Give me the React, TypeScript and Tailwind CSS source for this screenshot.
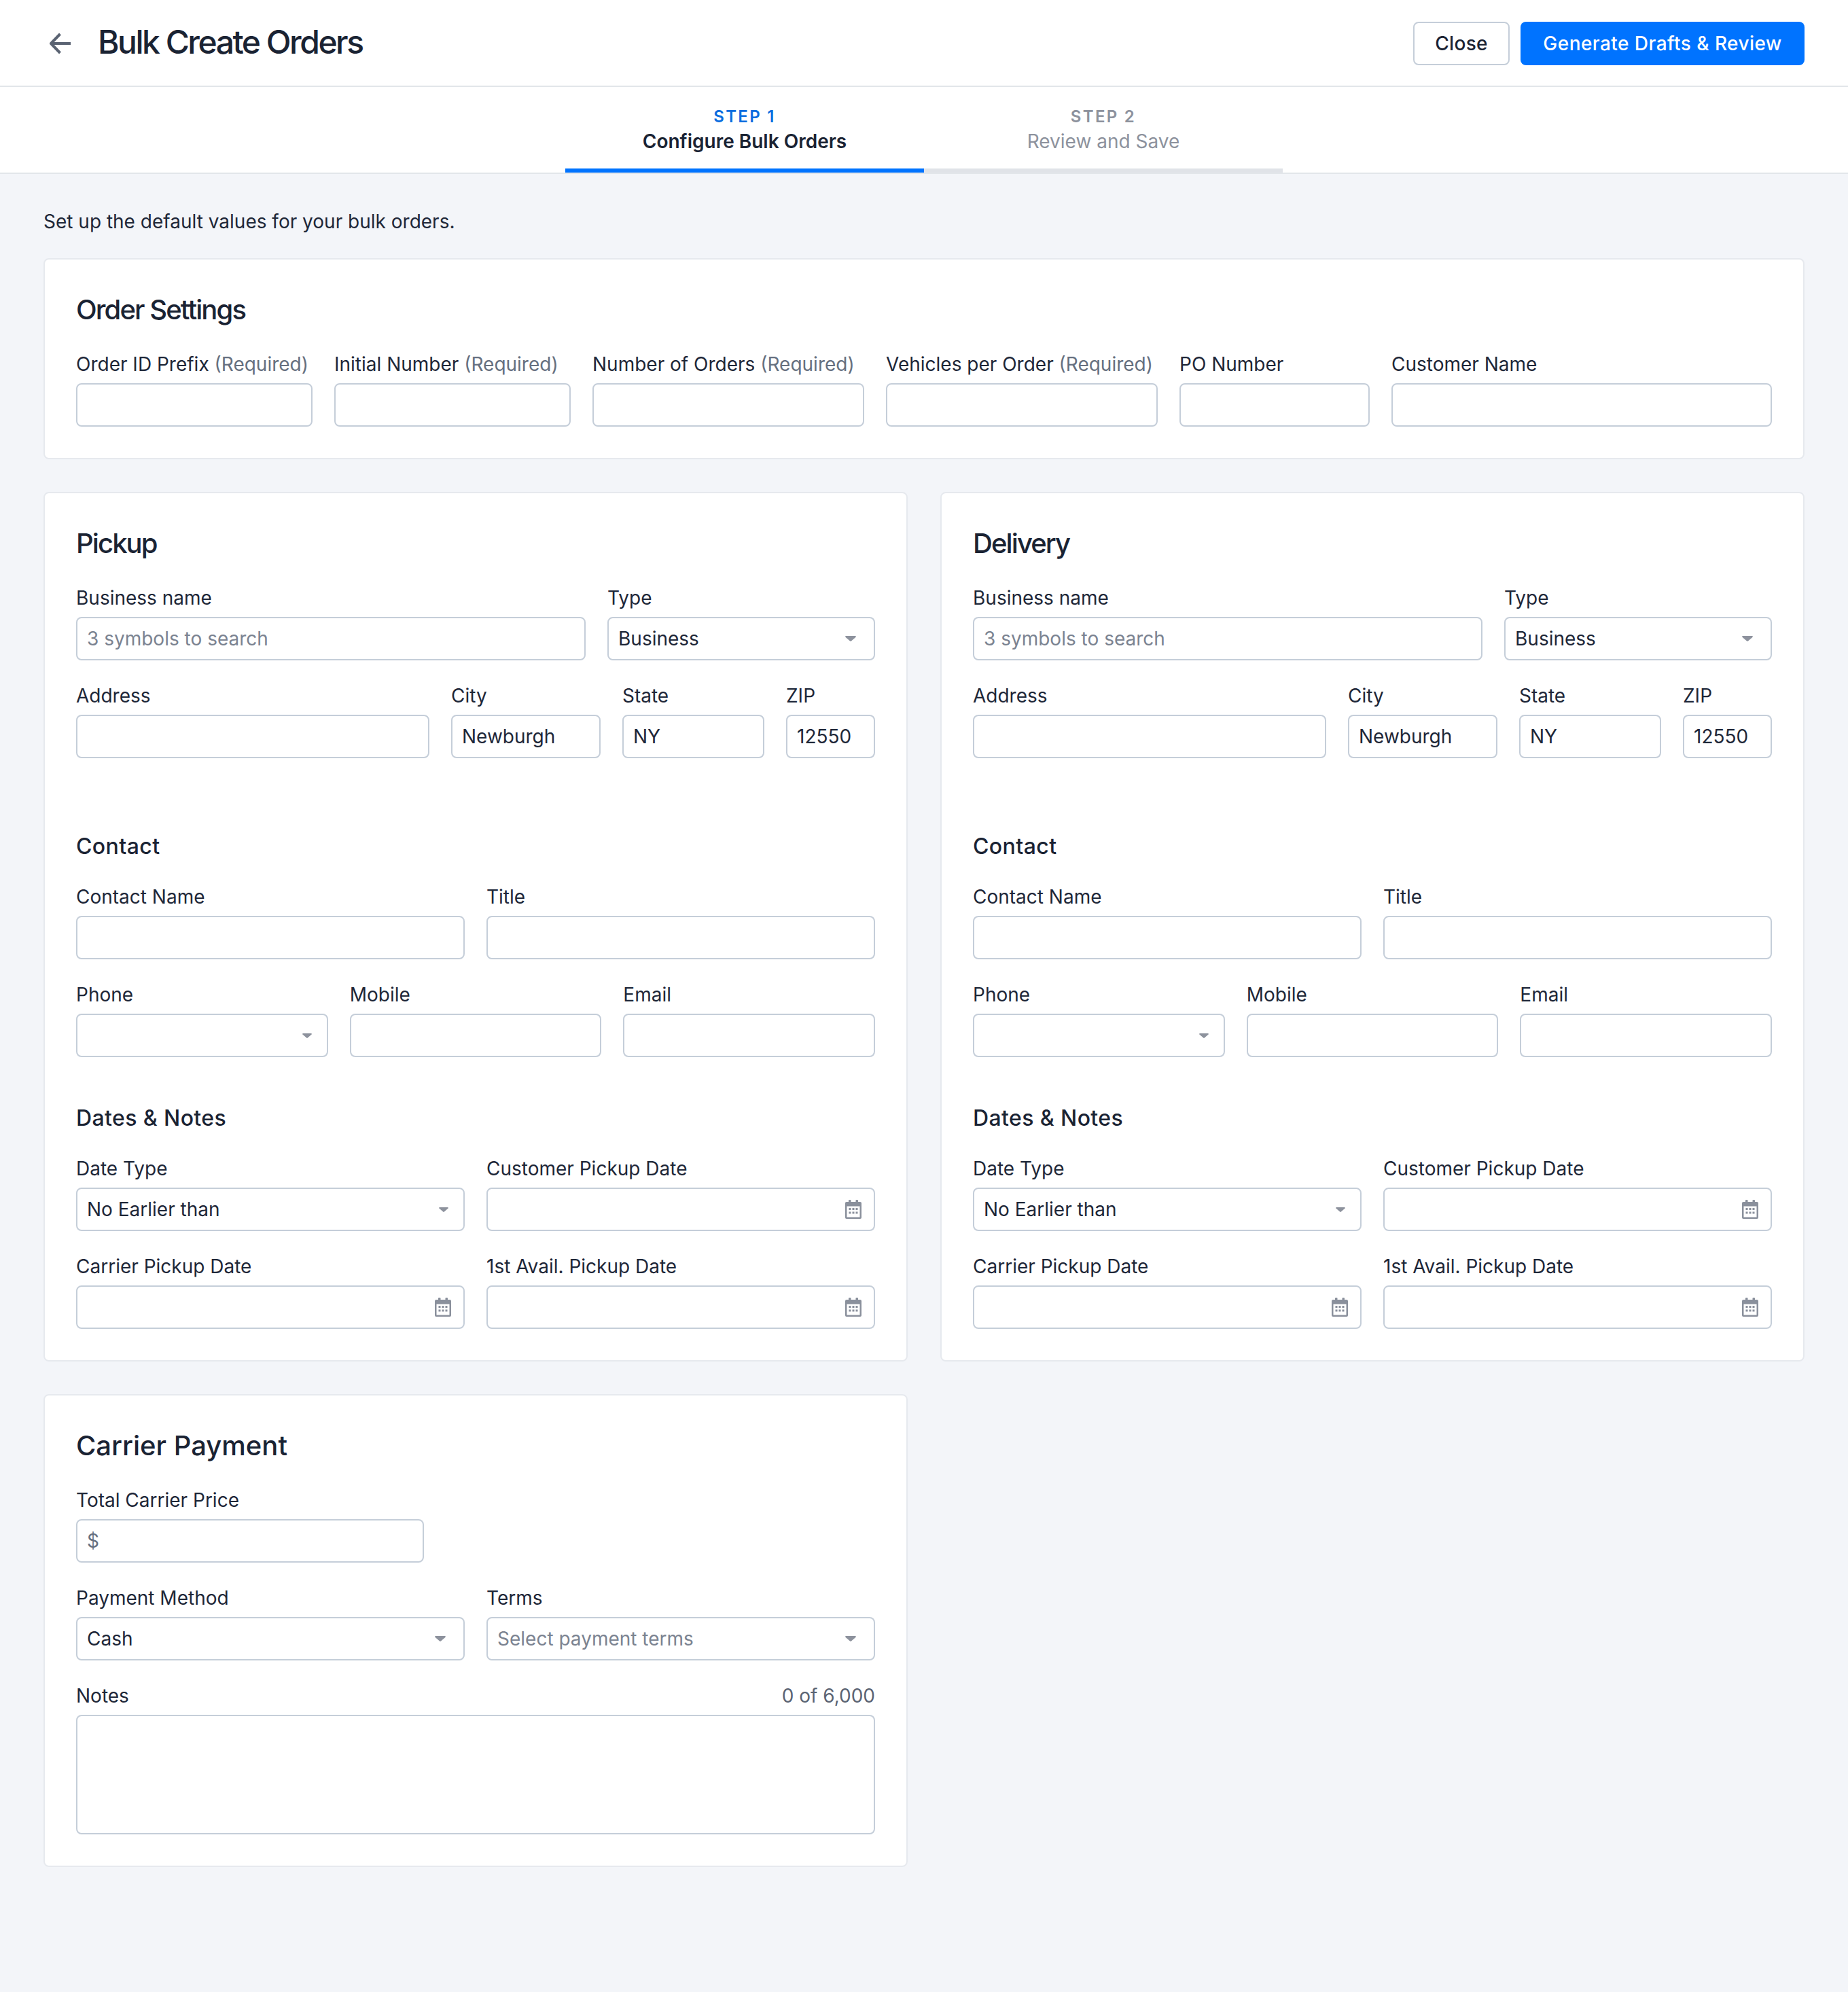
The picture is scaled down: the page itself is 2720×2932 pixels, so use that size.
import React from 'react';

interface FieldProps {
  label: string;
  hint?: string;
  value?: string;
  placeholder?: string;
  icon?: 'caret' | 'caretSmall' | 'calendar';
  muted?: boolean;
}

const Caret = ({ small }: { small?: boolean }) => (
  <svg
    viewBox="0 0 16 8"
    className={small ? 'h-[7px] w-[14px] mr-[10px] shrink-0' : 'h-[8px] w-[16px] mr-[14px] shrink-0'}
    fill="#8d929d"
  >
    <path d="M1.2 0h13.6c.9 0 1.4 1 .8 1.7L9 7.5c-.5.6-1.5.6-2 0L.4 1.7C-.2 1 .3 0 1.2 0z" />
  </svg>
);

const CalendarIcon = () => (
  <svg viewBox="0 0 24 28" className="h-[28px] w-[24px] mr-[6px] shrink-0" fill="#8a909c">
    <rect x="5" y="0" width="3.5" height="5" rx="1" />
    <rect x="15.5" y="0" width="3.5" height="5" rx="1" />
    <rect x="0" y="3" width="24" height="25" rx="2" />
    <rect x="2.5" y="9.5" width="19" height="16" fill="#fff" />
    <rect x="5.5" y="12" width="3" height="3" />
    <rect x="10.5" y="12" width="3" height="3" />
    <rect x="15.5" y="12" width="3" height="3" />
    <rect x="5.5" y="17.5" width="3" height="3" />
    <rect x="10.5" y="17.5" width="3" height="3" />
    <rect x="15.5" y="17.5" width="3" height="3" />
  </svg>
);

const Field = ({ label, hint, value, placeholder, icon, muted }: FieldProps) => (
  <div className="min-w-0">
    <div className="mb-2 h-[40px] whitespace-nowrap text-[28px] leading-[40px] text-[#1e2738]">
      {label}
      {hint && <span className="text-[#667080]"> {hint}</span>}
    </div>
    <div className="flex h-[64px] items-center rounded-lg border-2 border-[#c5ced9] bg-white pl-[14px] pr-[12px]">
      <input
        readOnly
        value={value ?? ''}
        placeholder={placeholder}
        className={`min-w-0 flex-1 bg-transparent text-[28px] outline-none placeholder:text-[#7b8391] ${muted ? 'text-[#667080]' : 'text-[#1e2738]'}`}
      />
      {icon === 'caret' && <Caret />}
      {icon === 'caretSmall' && <Caret small />}
      {icon === 'calendar' && <CalendarIcon />}
    </div>
  </div>
);

const Card = ({ title, wide, children }: { title: string; wide?: boolean; children: React.ReactNode }) => (
  <section className="rounded-lg border-2 border-[#e6e9ee] bg-white p-[46px]">
    <h2 className={`mb-8 text-[40px] font-medium leading-[56px] text-[#1a2333] ${wide ? '' : 'tracking-[-1.9px]'}`}>{title}</h2>
    <div className="flex flex-col gap-8">{children}</div>
  </section>
);

const SubHeading = ({ children, className }: { children: React.ReactNode; className: string }) => (
  <h3 className={`mb-[-2px] text-[32px] font-medium leading-[48px] tracking-[0.4px] text-[#1a2333] ${className}`}>{children}</h3>
);

const Location = ({ title }: { title: string }) => (
  <Card title={title}>
    <div className="grid grid-cols-[750px_394px] gap-8">
      <Field label="Business name" placeholder="3 symbols to search" />
      <Field label="Type" value="Business" icon="caret" />
    </div>
    <div className="grid grid-cols-[520px_220px_209px_131px] gap-8">
      <Field label="Address" />
      <Field label="City" value="Newburgh" />
      <Field label="State" value="NY" />
      <Field label="ZIP" value="12550" />
    </div>
    <SubHeading className="mt-[74px]">Contact</SubHeading>
    <div className="grid grid-cols-2 gap-8">
      <Field label="Contact Name" />
      <Field label="Title" />
    </div>
    <div className="grid grid-cols-3 gap-8">
      <Field label="Phone" icon="caretSmall" />
      <Field label="Mobile" />
      <Field label="Email" />
    </div>
    <SubHeading className="mt-[34px]">Dates &amp; Notes</SubHeading>
    <div className="grid grid-cols-2 gap-8">
      <Field label="Date Type" value="No Earlier than" icon="caretSmall" />
      <Field label="Customer Pickup Date" icon="calendar" />
      <Field label="Carrier Pickup Date" icon="calendar" />
      <Field label="1st Avail. Pickup Date" icon="calendar" />
    </div>
  </Card>
);

export default function App() {
  return (
    <div className="min-h-[2932px] bg-[#f3f5f9] font-['Inter',sans-serif]">
      <header className="flex h-[128px] items-center justify-between border-b-2 border-[#e2e6ea] bg-white pl-[72px] pr-[64px] pt-[2px]">
        <div className="flex items-center gap-[40px]">
          <svg viewBox="0 0 32 32" className="h-[32px] w-[32px]" fill="none" stroke="#5a6372" strokeWidth="4" strokeLinejoin="round">
            <path d="M32 16H3M16.5 2L3 16l13.5 14" />
          </svg>
          <h1 className="mb-[4px] text-[48px] font-medium leading-[64px] tracking-[-2.5px] text-[#1a2333]">Bulk Create Orders</h1>
        </div>
        <div className="flex items-center gap-4">
          <button className="h-[64px] w-[142px] rounded-lg border-2 border-[#c5ced9] bg-white text-[28px] font-medium tracking-[0.3px] text-[#1a2333]">
            Close
          </button>
          <button className="h-[64px] w-[418px] rounded-lg bg-[#0073ff] text-[28px] font-medium tracking-[0.45px] text-white">
            Generate Drafts &amp; Review
          </button>
        </div>
      </header>

      <nav className="flex h-[128px] justify-center border-b-2 border-[#e2e6ea] bg-white">
        <div className="flex h-[126px] w-[528px] flex-col items-center border-b-[6px] border-[#0073ff] pt-[26px]">
          <span className="text-[24px] font-semibold leading-[36px] tracking-[2.3px] text-[#0a6ddf]">STEP 1</span>
          <span className="text-[28px] font-semibold leading-[36px] text-[#1a2333]">Configure Bulk Orders</span>
        </div>
        <div className="flex h-[126px] w-[528px] flex-col items-center border-b-[6px] border-[#e0e3e8] pt-[26px]">
          <span className="text-[24px] font-semibold leading-[36px] tracking-[2.3px] text-[#8d929d]">STEP 2</span>
          <span className="text-[28px] leading-[36px] text-[#8d929d]">Review and Save</span>
        </div>
      </nav>

      <main className="px-16 pt-[50px]">
        <p className="mb-[34px] text-[28px] leading-[40px] text-[#1e2738]">Set up the default values for your bulk orders.</p>

        <Card title="Order Settings">
          <div className="grid grid-cols-[348px_348px_400px_400px_280px_560px] gap-8">
            <Field label="Order ID Prefix" hint="(Required)" />
            <Field label="Initial Number" hint="(Required)" />
            <Field label="Number of Orders" hint="(Required)" />
            <Field label="Vehicles per Order" hint="(Required)" />
            <Field label="PO Number" />
            <Field label="Customer Name" />
          </div>
        </Card>

        <div className="mt-12 grid grid-cols-2 gap-12">
          <Location title="Pickup" />
          <Location title="Delivery" />
          <Card title="Carrier Payment" wide>
            <div className="w-[512px]">
              <Field label="Total Carrier Price" value="$" muted />
            </div>
            <div className="grid grid-cols-2 gap-8">
              <Field label="Payment Method" value="Cash" icon="caret" />
              <Field label="Terms" placeholder="Select payment terms" icon="caret" />
            </div>
            <div>
              <div className="mb-2 flex h-[40px] items-center justify-between text-[28px] leading-[40px] text-[#1e2738]">
                <span>Notes</span>
                <span className="text-[#5b6473]">0 of 6,000</span>
              </div>
              <textarea readOnly className="block h-[176px] w-full resize-none rounded-lg border-2 border-[#c5ced9] bg-white outline-none" />
            </div>
          </Card>
        </div>
      </main>
    </div>
  );
}
